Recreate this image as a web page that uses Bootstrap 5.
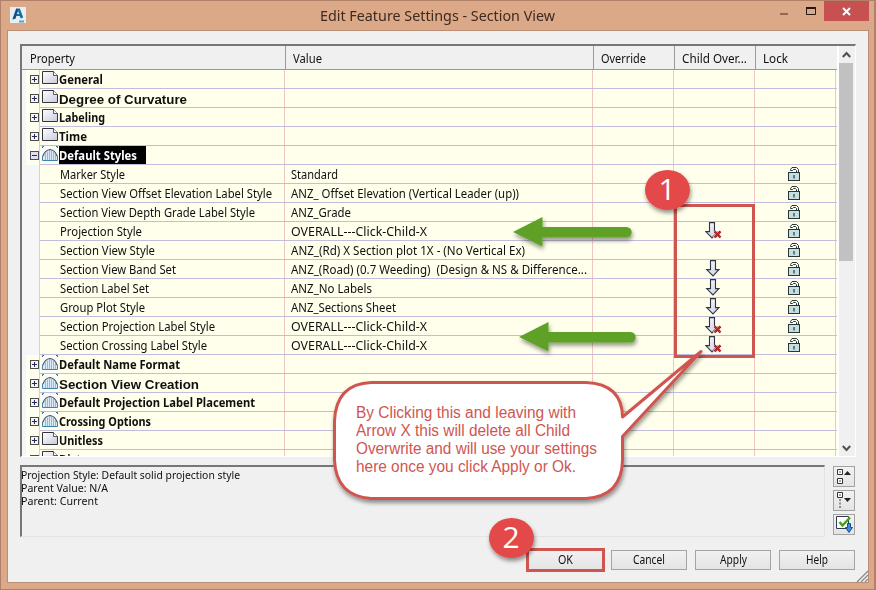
<!DOCTYPE html>
<html lang="en">
<head>
<meta charset="utf-8">
<title>Edit Feature Settings - Section View</title>
<link href="https://cdn.jsdelivr.net/npm/bootstrap@5.3.0/dist/css/bootstrap.min.css" rel="stylesheet">
<style>
body{width:876px;height:590px;overflow:hidden;font-family:"Noto Sans","Open Sans",sans-serif;font-size:12px;line-height:18px;color:#101010;background:#dba888}
svg{display:block;flex:none}
.win{width:876px;height:590px;background:#dba888;border:1px solid #b08068;border-right-width:2px;padding:0 6px 6px}
.titlebar{height:29px}
.title-mid{font-size:15px;color:#3d2a20;line-height:29px;padding-left:294px}
.appicon{margin:6px 0 0 3px}
.win-ctl{margin:1px 7px 0 0}
.close-box{width:45px;height:20px;background:#c75050;margin-right:-1px}
.client{height:553px;background:#f0f0f0;border:1px solid #b98f78;width:862px;padding:13px 12px 0 12px}
.grid-box{width:836px;height:413px;border:1px solid #a0a0a0;border-top:2px solid #777;border-left:2px solid #777;border-right-color:#fff;border-bottom-color:#fff;background:#f0f0f0;overflow:hidden}
.grid-main{width:815px;overflow:hidden;background:#f6f6f8}
.hd{height:24px;border-bottom:1px solid #999;background:#f0f0f0;line-height:25px}
.hd>div{border-right:1px solid #9a9a9a;padding-left:7px;flex:none}
.hd>div:first-child{padding-left:8px}
.hd>div:last-child{border-right:0}
.line{height:19px}
.gut{width:18px;flex:none;border-right:1px solid #efc5c5;padding-left:8px;padding-top:5px;background:linear-gradient(90deg,#f6f6f8 4px,#fffff0 4px)}
.leaf .gut{background:#f6f6f8}
.cells{flex:none;width:798px;background:#ffffeb;border-bottom:1px solid #c2bddc;line-height:20px}
.cells>div{border-right:1px solid #efc5c5;height:18px;flex:none;overflow:hidden}
.c1{width:245px}.c2{width:308px;padding-left:6px}.c3{width:81px}.c4{width:81px}.c5{width:81px}
.leaf .c1{padding-left:20px}
.grp .c1{padding-left:2px}
.pg{padding-top:1px}
.grp .lbl{font-weight:700;margin-left:1px;height:18px}
.grp .wide{font-family:"Liberation Sans",Arial,sans-serif;line-height:22px}
.sel .lbl{background:#000;color:#fff;width:87px}
.fit{display:inline-block;white-space:pre;transform-origin:0 50%}
.c4 svg{margin:0 0 0 31px}
.c5 svg{margin:2px 0 0 33px}
.sbar{width:17px;border-left:2px solid #fff;padding-right:1px}
.thumb{height:198px;background:#c1c1c1}
.info{width:805px;height:72px;border:1px solid #e3e3e3;border-top:2px solid #777;border-left:2px solid #777;margin-top:8px;font-size:11px;line-height:13px;padding-top:1px}
.info .fit{margin-left:-1px;height:13px;vertical-align:top}
.tool{width:22px;height:21px;border:1px solid #a2a2a2;background:linear-gradient(#f2f2f2,#e4e4e4);margin-bottom:3px}
.tools{margin-top:9px;margin-left:8px}
.btn-win{width:76px;height:20px;border:1px solid #a4a4a4;border-radius:0;background:linear-gradient(#f1f1f1,#e4e4e4);padding:0;font-size:12px;line-height:18px;color:#101010}
.btn-win:first-child{border-color:transparent}
.foot{gap:8px;margin-top:12px;padding-right:1px}
.over{position:absolute;left:0;top:0;pointer-events:none}
</style>
<script src="https://cdn.jsdelivr.net/npm/bootstrap@5.3.0/dist/js/bootstrap.bundle.min.js"></script>
</head>
<body>
<svg width="0" height="0" class="position-absolute">
<defs>
<linearGradient id="gp" x1="0" y1="0" x2="1" y2="1"><stop offset="0" stop-color="#fff"/><stop offset="1" stop-color="#c9c9de"/></linearGradient>
<symbol id="plus" viewBox="0 0 9 9"><rect x=".5" y=".5" width="8" height="8" fill="#f4f4f4" stroke="#4c4c4c"/><path d="M2 4.5h5M4.500 2v5" stroke="#28285a"/></symbol>
<symbol id="minus" viewBox="0 0 9 9"><rect x=".5" y=".5" width="8" height="8" fill="#dfe2ee" stroke="#4c4c6a"/><path d="M2 4.500h5" stroke="#28285a"/></symbol>
<symbol id="page" viewBox="0 0 16 14"><path d="M.5.500h11l4 4v8H.5z" fill="url(#gp)" stroke="#34343c"/><path d="M11.500.500v4h4" fill="#fff" stroke="#34343c" stroke-width=".8"/></symbol>
<symbol id="arch" viewBox="0 0 16 16"><path d="M0 0h16v16H0z" fill="#fbfdfa"/><path d="M.5 2V.500H2M14 .500h1.500V2" fill="none" stroke="#2b6db0"/><path d="M1 14.500V10Q3 4 8 3.500 13 4 15 10v4.500z" fill="#dce9f6"/><path d="M3.500 14V7M5.500 14V5.500M7.500 14V4.500M9.500 14V4.500M11.500 14V6M13.500 14V8" stroke="#8fb2d8" stroke-width=".9"/><path d="M1 10Q3 4 8 3.500 13 4 15 10" fill="none" stroke="#46505e" stroke-width="1.1"/><path d="M.5 9.500v5h15v-5" fill="none" stroke="#3e86a8"/></symbol>
<symbol id="lock" viewBox="0 0 12 15"><path d="M2.500 3.500V2.500L4 .5H8.500L10.500 2.500V6M2.500 3.500H4.500L5.500 2.500H7.500L8.500 3.500V6" fill="none" stroke="#27363a" stroke-width="1"/><path d="M3.500 2.500L4.500 1.500H8.200L9.500 3V6" fill="none" stroke="#f2f5ee" stroke-width="1"/><rect x=".5" y="5.500" width="11" height="8" fill="#c5dfe1" stroke="#27363a"/><path d="M6 8v3.500" stroke="#27363a" stroke-width="1.200"/></symbol>
<symbol id="down" viewBox="0 0 18 17"><path d="M5.500 .6h5v9h3.500L8 16 1.700 9.600H5.500z" fill="url(#gp)" stroke="#2e3646" stroke-width="1.100"/></symbol>
<symbol id="downx" viewBox="0 0 18 17"><path d="M4.500 .6h5v9h3.500L7 16 .8 9.600H4.500z" fill="url(#gp)" stroke="#2e3646" stroke-width="1.100"/><path d="M9.500 9l6.500 7M16 9l-6.500 7" stroke="#fffff0" stroke-width="3.800"/><path d="M9.500 9.300l6 6.200M15.500 9.300l-6 6.200" stroke="#a81818" stroke-width="2.400"/><path d="M10 9.800l5 5.200M15 9.800l-5 5.200" stroke="#e46060" stroke-width=".7" stroke-dasharray="1 1"/></symbol>
</defs>
</svg>

<div class="win">
  <div class="titlebar d-flex justify-content-between">
    <svg class="appicon" width="16" height="16" viewBox="0 0 16 16"><rect width="16" height="16" fill="#e6eff5"/><path d="M2.500 12.500L6.300 1.500h3.600l3.300 9-2.500 1-1-2.500H6.400l-1 2.600z" fill="#1d6c9e"/><path d="M7 7l1-3.300L9.200 7z" fill="#e6eff5"/><path d="M6.300 1.500L2.500 12.500l2.900-1L8 3z" fill="#174f79"/><rect x="9" y="13.500" width="5" height="2" fill="#5a9fc4"/></svg>
    <div class="title-mid flex-fill"><span class="fit" data-w="235">Edit Feature Settings - Section View</span></div>
    <svg width="40" height="20" class="win-ctl" viewBox="0 0 40 20"><path d="M3 12h8" stroke="#8d6a55" stroke-width="2"/><path d="M29.500 6.500h9v6h-9z" fill="none" stroke="#231a14" stroke-width="1"/><path d="M29 6h10" stroke="#231a14" stroke-width="2"/></svg>
    <div class="close-box d-flex justify-content-center align-items-center"><svg width="9" height="9" viewBox="0 0 9 9"><path d="M1 1l7 7M8 1l-7 7" stroke="#fff" stroke-width="2"/></svg></div>
  </div>
  <div class="client">
    <div class="grid-box d-flex">
      <div class="grid-main">
        <div class="hd d-flex">
          <div style="width:264px"><span class="fit" data-w="45">Property</span></div>
          <div style="width:308px"><span class="fit" data-w="29">Value</span></div>
          <div style="width:81px"><span class="fit" data-w="45">Override</span></div>
          <div style="width:81px"><span class="fit" data-w="65">Child Over...</span></div>
          <div style="width:81px"><span class="fit" data-w="25">Lock</span></div>
        </div>
        <div id="rows"></div>
      </div>
      <div class="sbar">
        <svg width="15" height="17" viewBox="0 0 15 17"><path d="M3.800 11L7.500 7l3.700 4" fill="none" stroke="#505050" stroke-width="2"/></svg>
        <div class="thumb"></div>
        <svg width="15" height="195" viewBox="0 0 15 195"><path d="M3.800 185l3.700 4 3.700-4" fill="none" stroke="#505050" stroke-width="2"/></svg>
      </div>
    </div>
    <div class="d-flex">
      <div class="info">
        <div><span class="fit" data-w="219">Projection Style: Default solid projection style</span></div>
        <div><span class="fit" data-w="87">Parent Value: N/A</span></div>
        <div><span class="fit" data-w="77">Parent: Current</span></div>
      </div>
      <div class="tools">
        <div class="tool"><svg width="20" height="19" viewBox="0 0 20 19"><path d="M3.500 2.500h5v5h-5zM3.500 11.500h5v5h-5z" fill="#fff" stroke="#333"/><path d="M5 5h2M5 14h2" stroke="#555"/><path d="M10 8l3.500-4L17 8z" fill="#222"/></svg></div>
        <div class="tool"><svg width="20" height="19" viewBox="0 0 20 19"><path d="M3.500 1.500h5v5h-5z" fill="#fff" stroke="#333"/><path d="M5 4h2" stroke="#555"/><path d="M6 8v9" stroke="#333" stroke-dasharray="2 1.500"/><path d="M10 7h7l-3.500 4z" fill="#222"/></svg></div>
        <div class="tool"><svg width="20" height="19" viewBox="0 0 20 19"><path d="M2.500 1.500h12v12h-12z" fill="#fff" stroke="#303a50"/><path d="M5.500 7l3 3.500 7.500-8" fill="none" stroke="#43a01c" stroke-width="2.500"/><path d="M13.500 8.500h3v4h2L15 17.500l-3.500-5h2z" fill="#3b8be0" stroke="#123f80" stroke-width=".9"/></svg></div>
      </div>
    </div>
    <div class="foot d-flex justify-content-end">
      <button class="btn btn-win"><span class="fit" data-w="15">OK</span></button>
      <button class="btn btn-win"><span class="fit" data-w="32">Cancel</span></button>
      <button class="btn btn-win"><span class="fit" data-w="27">Apply</span></button>
      <button class="btn btn-win"><span class="fit" data-w="22">Help</span></button>
    </div>
  </div>
</div>

<svg class="over" width="876" height="590" viewBox="0 0 876 590">
  <defs><filter id="sh" x="-20%" y="-20%" width="140%" height="150%"><feDropShadow dx="1" dy="3" stdDeviation="2" flood-color="#000" flood-opacity=".42"/></filter></defs>
  <path d="M857 582l11-11M861 582l7-7M865 582l3-3" stroke="#8a8a8a" stroke-width="1.300"/>
  <g fill="#5ea126" filter="url(#sh)">
    <path d="M513 232l29.500-15v10H626.500a5.200 5.200 0 0 1 0 10.400H542.500V246.500z"/>
    <path d="M519 337l29.500-15v10H630.500a5.200 5.200 0 0 1 0 10.400H548.500V351.500z"/>
  </g>
  <rect x="675.500" y="205.500" width="78" height="151" fill="none" stroke="#cf5650" stroke-width="3"/>
  <rect x="527.500" y="549.500" width="76" height="21" fill="none" stroke="#cf5650" stroke-width="3"/>
  <path filter="url(#sh)" d="M371 382.500H586Q622 384 622.500 417L701 351.500 622.500 436.500V460Q622 496 586 498.500H371Q336 496 334.500 460V421Q336 384 371 382.500z" fill="#fff" stroke="#cf5650" stroke-width="3" stroke-linejoin="round"/>
  <g font-family="Liberation Sans, Arial, sans-serif" font-size="16" fill="#cf5650">
    <text x="356" y="418" textLength="220" lengthAdjust="spacingAndGlyphs">By Clicking this and leaving with</text>
    <text x="356" y="436" textLength="214" lengthAdjust="spacingAndGlyphs">Arrow X this will delete all Child</text>
    <text x="356" y="454" textLength="241" lengthAdjust="spacingAndGlyphs">Overwrite and will use your settings</text>
    <text x="356" y="472" textLength="220" lengthAdjust="spacingAndGlyphs">here once you click Apply or Ok.</text>
  </g>
  <g filter="url(#sh)" fill="#e44a4a"><ellipse cx="667.500" cy="190" rx="22.500" ry="20"/><ellipse cx="511.500" cy="538" rx="22.500" ry="20"/></g>
  <g font-family="Open Sans, sans-serif" font-size="30" fill="#fff" text-anchor="middle"><text x="667" y="200">1</text><text x="511" y="548">2</text></g>
</svg>

<script>
// Each row: kind, label, label width, value, value width, child-override icon
const rows=[
["page","General",44],["page","Degree of Curvature",128,"wide"],["page","Labeling",46],["page","Time",28],["arch","Default Styles",78,"sel"],
["leaf","Marker Style",65,"Standard",47,""],
["leaf","Section View Offset Elevation Label Style",212,"ANZ_ Offset Elevation (Vertical Leader (up))",228,""],
["leaf","Section View Depth Grade Label Style",195,"ANZ_Grade",60,""],
["leaf","Projection Style",82,"OVERALL---Click-Child-X",136,"downx"],
["leaf","Section View Style",95,"ANZ_(Rd) X Section plot 1X - (No Vertical Ex)",234,""],
["leaf","Section View Band Set",116,"ANZ_(Road) (0.7 Weeding)  (Design & NS & Difference...",296,"down"],
["leaf","Section Label Set",89,"ANZ_No Labels",81,"down"],
["leaf","Group Plot Style",85,"ANZ_Sections Sheet",105,"down"],
["leaf","Section Projection Label Style",155,"OVERALL---Click-Child-X",136,"downx"],
["leaf","Section Crossing Label Style",147,"OVERALL---Click-Child-X",136,"downx"],
["arch","Default Name Format",121],["arch","Section View Creation",140,"wide"],["arch","Default Projection Label Placement",196],["arch","Crossing Options",92],["page","Unitless",44],["page","Distance",49]];
const esc=s=>s.replace(/&/g,"&amp;");
const use=(id,w,h)=>id?`<svg width="${w}" height="${h}"><use href="#${id}"/></svg>`:"";
const fit=(t,w)=>`<span class="fit" data-w="${w}">${esc(t)}</span>`;
document.getElementById("rows").innerHTML=rows.map(r=>{
 const leaf=r[0]==="leaf",cls=leaf?"leaf":"grp "+(r[3]==="sel"?"sel":"");
 const first=leaf?fit(r[1],r[2]):`<div class="d-flex">${r[0]==="page"?`<div class="pg">${use("page",16,14)}</div>`:`<div>${use("arch",16,16)}</div>`}<div class="lbl ${r[3]==="wide"?"wide":""}">${fit(r[1],r[2])}</div></div>`;
 return `<div class="line d-flex ${cls}"><div class="gut">${leaf?"":use(r[3]==="sel"?"minus":"plus",9,9)}</div><div class="cells d-flex"><div class="c1">${first}</div><div class="c2">${leaf?fit(r[3],r[4]):""}</div><div class="c3"></div><div class="c4">${leaf?use(r[5],18,17):""}</div><div class="c5">${leaf?use("lock",12,15):""}</div></div></div>`;
}).join("");
document.querySelectorAll(".fit").forEach(e=>{
 const n=e.getBoundingClientRect().width,w=+e.dataset.w;
 e.style.transform=`scaleX(${w/n})`;
 e.style.marginRight=(w-n)+"px";
});
</script>
</body>
</html>
